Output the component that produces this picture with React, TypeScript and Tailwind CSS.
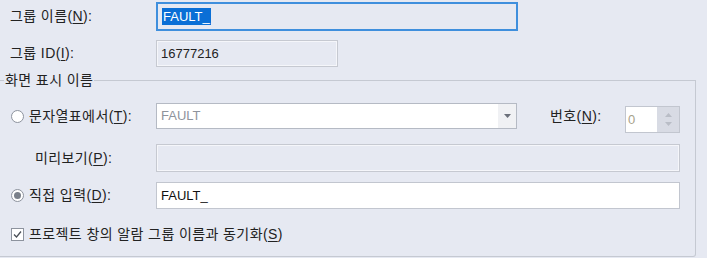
import React from 'react';

const FONT = { fontFamily: '"Liberation Sans", "Noto Sans CJK KR", sans-serif' };

const U = ({ children }: { children: React.ReactNode }) => <span className="underline underline-offset-2">{children}</span>;

const Radio = ({ checked }: { checked?: boolean }) => (
  <span className="w-[13px] h-[13px] rounded-full border border-[#8d939e] bg-white flex items-center justify-center shrink-0">
    {checked && <span className="w-[7px] h-[7px] rounded-full bg-[#7a808a]" />}
  </span>
);

const Checkbox = () => (
  <span className="w-[13px] h-[13px] border border-[#8d939e] bg-white flex items-center justify-center shrink-0">
    <svg width="11" height="11" viewBox="0 0 11 11">
      <path d="M2 5.5 L4.5 8 L9 2.5" fill="none" stroke="#4a4f57" strokeWidth="1.3" />
    </svg>
  </span>
);

export default function App() {
  return (
    <div className="w-[707px] h-[258px] bg-[#e6e9f2] text-[13px] text-[#222] overflow-hidden pt-[2px]" style={FONT}>
      {/* group name */}
      <div className="flex items-center h-[29px]">
        <span className="w-[156px] pl-[10px] text-[14px] tracking-[0.4px]">그룹 이름(<U>N</U>):</span>
        <div className="w-[362px] h-[29px] border-2 border-[#3f8fdd] flex items-center pl-[4px]">
          <span className="bg-[#0a6fd6] text-white px-[1px] leading-[17px]">FAULT_</span>
        </div>
      </div>

      {/* group id */}
      <div className="flex items-center h-[27px] mt-[9px]">
        <span className="w-[156px] pl-[10px] text-[14px] tracking-[0.4px]">그룹 ID(<U>I</U>):</span>
        <div className="w-[182px] h-[27px] border border-[#c6c9d1] shadow-[inset_0_0_0_1px_#f5f6fa] flex items-center pl-[4px]">
          16777216
        </div>
      </div>

      {/* display name group */}
      <fieldset className="mt-[5px] mr-[11px] border border-l-0 border-[#c5c9d2] rounded-br-[3px] p-0 h-[185px]">
        <legend className="ml-[4px] px-[1px] leading-[16px] text-[14px] tracking-[0.4px]">화면 표시 이름</legend>

        <div className="flex items-start h-[30px] mt-[15px]">
          <label className="w-[156px] h-[26px] pl-[11px] flex items-center gap-[5px] text-[14px] tracking-[0.4px]">
            <Radio />
            <span>문자열표에서(<U>T</U>):</span>
          </label>
          <div className="w-[361px] h-[26px] bg-white border border-[#b5bac4] flex items-center">
            <span className="flex-1 pl-[4px] text-[#8e939c]">FAULT</span>
            <span className="w-[18px] h-full bg-[#f0f1f4] flex items-center justify-center">
              <svg width="7" height="4" viewBox="0 0 7 4"><path d="M0 0 H7 L3.5 4 Z" fill="#6b707a" /></svg>
            </span>
          </div>
          <span className="w-[75px] ml-[33px] h-[26px] flex items-center text-[14px] tracking-[0.4px]">번호(<U>N</U>):</span>
          <div className="w-[55px] h-[27px] mt-[3px] flex border border-[#c2c6cf]">
            <span className="flex-1 bg-white flex items-center pl-[2px] text-[#a7a28c]">0</span>
            <span className="w-[22px] bg-[#d8dbe4] flex flex-col items-center justify-center gap-[5px]">
              <svg width="7" height="4" viewBox="0 0 7 4"><path d="M0 4 H7 L3.5 0 Z" fill="#b9bdc6" /></svg>
              <svg width="7" height="4" viewBox="0 0 7 4"><path d="M0 0 H7 L3.5 4 Z" fill="#b9bdc6" /></svg>
            </span>
          </div>
        </div>

        <div className="flex items-center h-[28px] mt-[11px]">
          <span className="w-[156px] pl-[35px] text-[14px] tracking-[0.4px]">미리보기(<U>P</U>):</span>
          <div className="w-[524px] h-[28px] border border-[#c6c9d1] shadow-[inset_0_0_0_1px_#f5f6fa]" />
        </div>

        <div className="flex items-center h-[27px] mt-[10px]">
          <label className="w-[156px] pl-[11px] flex items-center gap-[5px] text-[14px] tracking-[0.4px]">
            <Radio checked />
            <span>직접 입력(<U>D</U>):</span>
          </label>
          <div className="w-[524px] h-[27px] bg-white border border-[#c2c6cf] flex items-center pl-[4px] text-[#111]">
            FAULT_
          </div>
        </div>

        <label className="flex items-center gap-[5px] pl-[11px] mt-[15px] text-[14px] tracking-[0.4px]">
          <Checkbox />
          <span>프로젝트 창의 알람 그룹 이름과 동기화(<U>S</U>)</span>
        </label>
      </fieldset>
    </div>
  );
}
